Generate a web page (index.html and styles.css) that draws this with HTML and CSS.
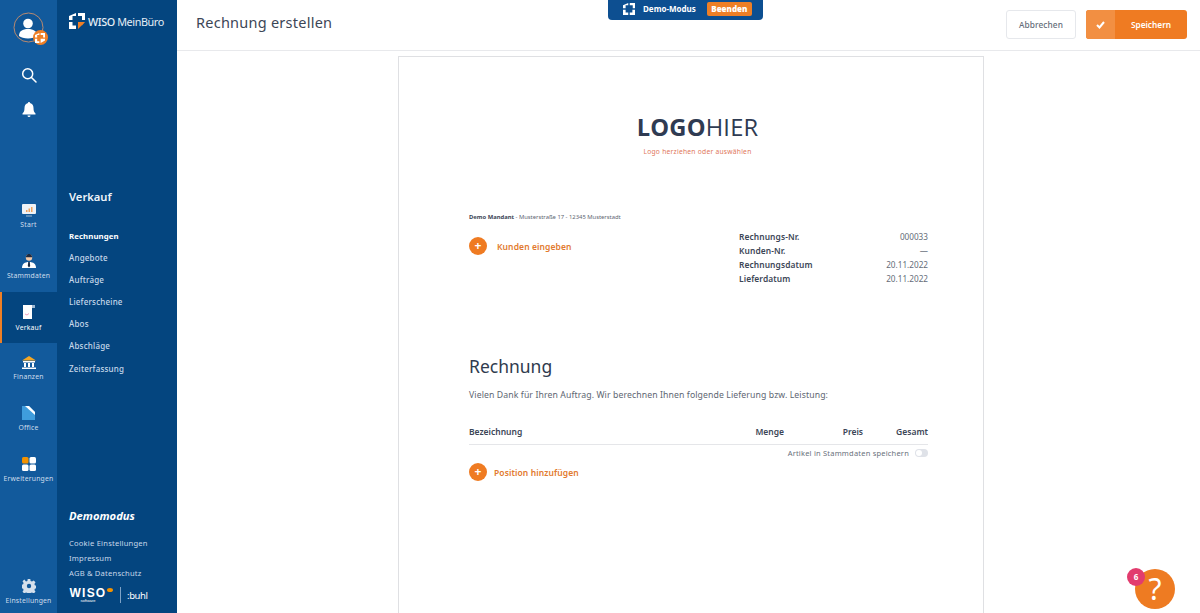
FILE: index.html
```html
<!DOCTYPE html>
<html lang="de">
<head>
  <meta charset="UTF-8">
  <title>Rechnung erstellen</title>
  <link rel="stylesheet" href="styles.css">
</head>
<body>

  <!-- Icon-Leiste -->
  <nav class="rail">
    <div class="avatar">
      <svg width="32" height="32" viewBox="0 0 32 32"><circle cx="15.500" cy="15.500" r="14.500" fill="#0f5596" stroke="#b98a70" stroke-width="1"/><circle cx="15" cy="11.500" r="4.800" fill="#fff"/><path d="M6 24c0-5 3.500-7 9-7s9 2 9 7c-2 1.500-5 2.500-9 2.500S8 25.500 6 24z" fill="#fff"/></svg>
      <span class="avatar-badge">
        <svg width="10" height="10" viewBox="0 0 16 16" fill="#fff"><path d="M0 3l7-3v3H3.500v4H0zM9 0h7v7h-3V3H9zM0 9h3.500v4H7v3H0zM16 9v3l-7 4V9z"/></svg>
      </span>
    </div>
    <a class="rail-tool"><svg width="16" height="16" viewBox="0 0 16 16" fill="none" stroke="#fff" stroke-width="1.500"><circle cx="6.700" cy="6.700" r="5"/><path d="M10.500 10.500l4.500 4.500" stroke-linecap="round"/></svg></a>
    <a class="rail-tool"><svg width="14" height="15" viewBox="0 0 14 15" fill="#fff"><path d="M7 0c.6 0 1 .4 1 1 2.400.5 3.500 2.400 3.500 5 0 3 .7 4.300 2 5.500v1H.5v-1C1.800 10.300 2.500 9 2.500 6c0-2.600 1.100-4.500 3.500-5 0-.6.400-1 1-1zM5.500 13.500h3a1.500 1.500 0 0 1-3 0z"/></svg></a>

    <div class="rail-group">
      <a class="rail-item">
        <svg width="14" height="13" viewBox="0 0 14 13"><rect width="14" height="10" rx="1" fill="#eef2f6"/><rect x="4" y="6" width="1.500" height="2" fill="#f0a35e"/><rect x="6.500" y="4.500" width="1.500" height="3.500" fill="#f0a35e"/><rect x="9" y="3" width="1.500" height="5" fill="#f0a35e"/><rect x="4" y="11.500" width="6" height="1" fill="#9db9d4"/></svg>
        <span>Start</span>
      </a>
      <a class="rail-item">
        <svg width="14" height="14" viewBox="0 0 14 14"><circle cx="7" cy="3.500" r="3.200" fill="#f3c9a8"/><path d="M3.800 3.200C4 1 5.500 0 7 0s3 1 3.200 3.200z" fill="#1d2c44"/><path d="M0 14c0-4 2.500-6 7-6s7 2 7 6z" fill="#fff"/><path d="M6.200 8h1.600l.4 4-1.200 1.500L5.800 12z" fill="#1d2c44"/></svg>
        <span>Stammdaten</span>
      </a>
      <a class="rail-item active">
        <svg width="14" height="16" viewBox="0 0 14 16"><path d="M1 1h9v14H1z" fill="#fff"/><path d="M10 1h3v3h-3z" fill="#9db9d4"/><path d="M3 10l2 1 2-1.500" stroke="#ee9fc0" fill="none"/></svg>
        <span>Verkauf</span>
      </a>
      <a class="rail-item">
        <svg width="14" height="13" viewBox="0 0 14 13"><path d="M7 0l7 4.500H0z" fill="#f5a623"/><rect x="1" y="5" width="12" height="1.500" fill="#fff"/><path d="M2 7h2v4H2zM6 7h2v4H6zM10 7h2v4h-2z" fill="#fff"/><rect y="11.500" width="14" height="1.500" fill="#fff"/></svg>
        <span>Finanzen</span>
      </a>
      <a class="rail-item">
        <svg width="13" height="14" viewBox="0 0 13 14"><path d="M0 0h7l6 6v8H0z" fill="#3f9ddd"/><path d="M3 0h4l6 6v3z" fill="#fff"/></svg>
        <span>Office</span>
      </a>
      <a class="rail-item">
        <svg width="14" height="14" viewBox="0 0 14 14"><rect width="6.500" height="6.500" rx="1.500" fill="#f39200"/><rect x="7.500" width="6.500" height="6.500" rx="1.500" fill="#fff"/><rect y="7.500" width="6.500" height="6.500" rx="1.500" fill="#fff"/><rect x="7.500" y="7.500" width="6.500" height="6.500" rx="1.500" fill="#fff"/></svg>
        <span>Erweiterungen</span>
      </a>
    </div>

    <a class="rail-item rail-bottom">
      <svg width="14" height="14" viewBox="0 0 14 14"><path d="M5.700 0h2.600l.3 2 1.400.6 1.700-1.100 1.800 1.800-1.100 1.700.6 1.400 2 .3v2.600l-2 .3-.6 1.400 1.100 1.700-1.800 1.800-1.700-1.100-1.400.6-.3 2H5.700l-.3-2-1.400-.6-1.700 1.100-1.800-1.800 1.100-1.700-.6-1.400-2-.3V5.700l2-.3.6-1.400-1.100-1.700 1.800-1.800L4 2.600 5.400 2z" fill="#d5e0ec"/><circle cx="7" cy="7" r="2.200" fill="#125a9c"/></svg>
      <span>Einstellungen</span>
    </a>
  </nav>

  <!-- Untermenue -->
  <aside class="subnav">
    <div class="brand">
      <svg width="16" height="16" viewBox="0 0 16 16"><path d="M0 3l7-3v3H3.500v4H0zM9 0h7v7h-3V3H9zM0 9h3.500v3.500H7V16H0z" fill="#fff"/><path d="M9 9h7l-3 3.500H12.500L9 16z" fill="#ee7f26"/></svg>
      <span class="brand-name"><b>WISO</b> MeinBüro</span>
    </div>

    <h2 class="subnav-title">Verkauf</h2>
    <ul class="subnav-list">
      <li class="current">Rechnungen</li>
      <li>Angebote</li>
      <li>Aufträge</li>
      <li>Lieferscheine</li>
      <li>Abos</li>
      <li>Abschläge</li>
      <li>Zeiterfassung</li>
    </ul>

    <div class="subnav-foot">
      <div class="demo-title">Demomodus</div>
      <a>Cookie Einstellungen</a>
      <a>Impressum</a>
      <a>AGB &amp; Datenschutz</a>
      <div class="foot-logos">
        <span class="wiso">WISO<small>software</small><i></i></span>
        <span class="foot-sep"></span>
        <span class="buhl">:buhl</span>
      </div>
    </div>
  </aside>

  <main class="main">
    <header class="topbar">
      <h1>Rechnung erstellen</h1>
      <div class="actions">
        <button class="btn-cancel">Abbrechen</button>
        <button class="btn-save"><span class="btn-check"><svg width="9" height="8" viewBox="0 0 9 8" fill="none" stroke="#fff" stroke-width="2"><path d="M1 4l2.500 2.500L8 1"/></svg></span><span class="btn-label">Speichern</span></button>
      </div>
    </header>

    <div class="demo-bar">
      <svg width="12" height="12" viewBox="0 0 16 16" fill="#fff"><path d="M0 3l7-3v3H3.500v4H0zM9 0h7v7h-3V3H9zM0 9h3.500v3.500H7V16H0zM16 9v7H9v-3.500h3.500V9z"/></svg>
      <span>Demo-Modus</span>
      <b>Beenden</b>
    </div>

    <section class="paper">
      <div class="logo-drop">
        <div class="logo-text"><b>LOGO</b>HIER</div>
        <div class="logo-hint">Logo herziehen oder auswählen</div>
      </div>

      <div class="sender"><b>Demo Mandant</b> - Musterstraße 17 - 12345 Musterstadt</div>

      <div class="address-row">
        <a class="add-link add-customer"><span class="plus">+</span>Kunden eingeben</a>
        <dl class="meta">
          <dt>Rechnungs-Nr.</dt><dd>000033</dd>
          <dt>Kunden-Nr.</dt><dd>—</dd>
          <dt>Rechnungsdatum</dt><dd>20.11.2022</dd>
          <dt>Lieferdatum</dt><dd>20.11.2022</dd>
        </dl>
      </div>

      <h2 class="doc-title">Rechnung</h2>
      <p class="doc-intro">Vielen Dank für Ihren Auftrag. Wir berechnen Ihnen folgende Lieferung bzw. Leistung:</p>

      <div class="table-head">
        <span class="col-name">Bezeichnung</span>
        <span class="col-qty">Menge</span>
        <span class="col-price">Preis</span>
        <span class="col-total">Gesamt</span>
      </div>
      <div class="save-row">
        <span>Artikel in Stammdaten speichern</span>
        <span class="toggle"></span>
      </div>
      <a class="add-link add-position"><span class="plus">+</span>Position hinzufügen</a>
    </section>

    <div class="help">
      <span class="help-badge">6</span>
      ?
    </div>
  </main>

</body>
</html>
```

FILE: styles.css
```css
* { box-sizing: border-box; }

html, body {
  margin: 0;
  height: 613px;
  overflow: hidden;
}

body {
  display: flex;
  font-family: 'Noto Sans', sans-serif;
  background: #fff;
  color: #3c4656;
}

/* Icon-Leiste */
.rail {
  width: 57px;
  flex: none;
  background: #125a9c;
  display: flex;
  flex-direction: column;
  align-items: center;
  padding-top: 12px;
}

.avatar {
  position: relative;
  width: 32px;
  height: 32px;
  margin-bottom: 13px;
}

.avatar svg { display: block; }

.avatar-badge {
  position: absolute;
  right: -3px;
  bottom: -1px;
  width: 15px;
  height: 15px;
  border-radius: 50%;
  background: #ee7f26;
  display: flex;
  justify-content: center;
  align-items: center;
}

.rail-tool {
  height: 35px;
  display: flex;
  justify-content: center;
  align-items: center;
}

.rail-group {
  width: 100%;
  margin-top: 64px;
}

.rail-item {
  height: 50.700px;
  width: 100%;
  display: flex;
  flex-direction: column;
  justify-content: center;
  align-items: center;
  gap: 3px;
  color: #d0deec;
  font-size: 6.800px;
  letter-spacing: .2px;
  white-space: nowrap;
}

.rail-item.active {
  background: #04457f;
  color: #fff;
  border-left: 2px solid #ee7f26;
  padding-right: 2px;
}

.rail-bottom {
  height: 41px;
  margin-top: auto;
  margin-bottom: 1px;
}

/* Untermenue */
.subnav {
  width: 120px;
  flex: none;
  background: #04457f;
  padding: 13px 0 0 12px;
  display: flex;
  flex-direction: column;
  color: #c7d8ea;
}

.brand {
  display: flex;
  align-items: center;
  gap: 3px;
  height: 16px;
}

.brand-name {
  color: #e6eef6;
  font-size: 10.800px;
  letter-spacing: -.4px;
  white-space: nowrap;
}

.brand-name b { font-weight: 500; }

.subnav-title {
  margin: 159px 0 0;
  font-size: 11.200px;
  line-height: 18px;
  font-weight: 600;
  color: #eef4fa;
}

.subnav-list {
  list-style: none;
  margin: 19px 0 0;
  padding: 0;
  font-size: 8px;
  font-weight: 500;
}

.subnav-list li {
  height: 22.100px;
  line-height: 22px;
  letter-spacing: .2px;
}

.subnav-list .current {
  color: #fff;
  font-size: 7.800px;
  font-weight: 700;
  letter-spacing: .1px;
}

.subnav-foot {
  margin-top: auto;
  font-size: 7.600px;
  display: flex;
  flex-direction: column;
}

.subnav-foot a {
  height: 15px;
  line-height: 15px;
  letter-spacing: .2px;
}

.demo-title {
  color: #fff;
  font-size: 11.200px;
  font-style: italic;
  font-weight: 700;
  line-height: 18px;
  margin-bottom: 11px;
}

.foot-logos {
  display: flex;
  align-items: center;
  height: 22px;
  margin: 3px 0 7px;
  color: #fff;
}

.wiso {
  position: relative;
  width: 38px;
  font-family: 'Liberation Sans', sans-serif;
  font-weight: 700;
  font-size: 12px;
  line-height: 10px;
  letter-spacing: 1.200px;
  display: flex;
  flex-direction: column;
  align-items: center;
}

.wiso small {
  font-size: 4px;
  line-height: 5px;
  font-weight: 400;
  letter-spacing: 0;
}

.wiso i {
  position: absolute;
  right: -6px;
  top: 0;
  width: 6px;
  height: 4px;
  border-radius: 50%;
  background: #f39200;
}

.foot-sep {
  width: 1px;
  height: 16px;
  background: #7ea2c6;
  margin: 0 6px 0 13px;
}

.buhl {
  font-size: 9.500px;
  letter-spacing: -.4px;
}

/* Hauptbereich */
.main {
  flex: 1;
  min-width: 0;
  position: relative;
  display: flex;
  flex-direction: column;
}

.topbar {
  height: 51px;
  flex: none;
  border-bottom: 1px solid #e8e9ec;
  display: flex;
  justify-content: space-between;
  align-items: center;
  padding: 0 13px 7px 19px;
}

.topbar h1 {
  margin: 0;
  font-size: 14.500px;
  font-weight: 400;
  letter-spacing: .25px;
  color: #3c4656;
}

.actions {
  display: flex;
  gap: 10px;
  margin-top: 6px;
}

.btn-cancel {
  width: 70px;
  height: 29px;
  padding: 0;
  background: #fff;
  border: 1px solid #e6e8ec;
  border-radius: 3px;
  font: 500 8.300px 'Noto Sans', sans-serif;
  letter-spacing: .1px;
  color: #646c78;
}

.btn-save {
  width: 101px;
  height: 29px;
  padding: 0;
  border: 0;
  border-radius: 3px;
  background: #ef7b22;
  display: flex;
  overflow: hidden;
  color: #fff;
  font: 600 8.300px 'Noto Sans', sans-serif;
}

.btn-check {
  width: 29px;
  background: #f28f42;
  display: flex;
  justify-content: center;
  align-items: center;
}

.btn-label {
  flex: 1;
  line-height: 29px;
  text-align: center;
}

.demo-bar {
  position: absolute;
  top: 0;
  left: 431px;
  width: 155px;
  height: 20px;
  background: #0d4f91;
  border-radius: 0 0 4px 4px;
  display: flex;
  align-items: center;
  padding: 0 0 3px 15px;
  color: #fff;
  font-size: 8px;
  font-weight: 700;
}

.demo-bar span { margin-left: 8px; }

.demo-bar b {
  margin-left: 11px;
  width: 45px;
  height: 14px;
  line-height: 14px;
  text-align: center;
  background: #ee7f26;
  border-radius: 2px;
}

/* Rechnung */
.paper {
  width: 586px;
  flex: 1;
  margin: 5px 0 0 221px;
  border: 1px solid #dfe0e3;
  border-bottom: 0;
  padding: 0 55px 0 70px;
}

.logo-drop {
  padding-top: 52px;
  text-align: center;
  margin-left: -2px;
}

.logo-text {
  font-family: 'Open Sans', sans-serif;
  font-size: 23.700px;
  line-height: 36px;
  letter-spacing: .2px;
  color: #2f3b52;
}

.logo-hint {
  margin-top: 2px;
  font-size: 6.700px;
  line-height: 10px;
  color: #e0775a;
  letter-spacing: .25px;
}

.sender {
  margin-top: 56px;
  font-size: 5.850px;
  line-height: 8px;
  color: #5e6672;
}

.sender b { color: #3c4656; }

.address-row {
  display: flex;
  justify-content: space-between;
  margin-top: 9px;
}

.add-link {
  display: flex;
  align-items: center;
  color: #e27a2e;
  font-size: 8.500px;
  font-weight: 600;
  letter-spacing: .1px;
}

.add-customer {
  align-self: flex-start;
  margin-top: 7px;
}

.add-position { margin-top: 2px; }

.plus {
  width: 18px;
  height: 18px;
  border-radius: 50%;
  background: #ef7b22;
  color: #fff;
  font-size: 12px;
  font-weight: 700;
  line-height: 18px;
  text-align: center;
  margin-right: 7px;
}

.add-customer .plus { margin-right: 10px; }

.meta {
  width: 189px;
  margin: 0;
  display: grid;
  grid-template-columns: 1fr auto;
  grid-auto-rows: 14px;
  font-size: 8.400px;
  line-height: 14px;
}

.meta dt {
  font-weight: 600;
  letter-spacing: .1px;
}

.meta dd {
  margin: 0;
  text-align: right;
  color: #656d78;
  font-size: 8.200px;
}

.doc-title {
  margin: 68px 0 0;
  font-size: 17.500px;
  font-weight: 400;
  line-height: 24px;
  color: #2f3b4e;
}

.doc-intro {
  margin: 10px 0 0;
  font-size: 8.700px;
  line-height: 14px;
  letter-spacing: .1px;
  color: #5e6672;
}

.table-head {
  display: flex;
  height: 22px;
  margin-top: 21px;
  border-bottom: 1px solid #e5e6e9;
  font-size: 8.500px;
  font-weight: 600;
  line-height: 14px;
  padding-top: 2px;
}

.col-name { flex: 1; }
.col-qty { width: 40px; text-align: right; }
.col-price { width: 79px; text-align: right; }
.col-total { width: 65px; text-align: right; }

.save-row {
  display: flex;
  justify-content: flex-end;
  align-items: center;
  gap: 6px;
  height: 16px;
  font-size: 7.500px;
  letter-spacing: .2px;
  color: #6a717c;
}

.toggle {
  width: 13px;
  height: 8px;
  border-radius: 4px;
  background: #dfe2e8;
  display: flex;
  align-items: center;
  padding-left: 1px;
}

.toggle::after {
  content: '';
  width: 6px;
  height: 6px;
  border-radius: 50%;
  background: #fff;
}

.help {
  position: absolute;
  right: 25px;
  bottom: 4px;
  width: 40px;
  height: 40px;
  border-radius: 50%;
  background: #ee7b22;
  color: #fff;
  font-size: 30px;
  font-weight: 400;
  line-height: 40px;
  text-align: center;
}

.help-badge {
  position: absolute;
  left: -8px;
  top: -1px;
  width: 18px;
  height: 18px;
  border-radius: 50%;
  background: #e23c6e;
  font-size: 8px;
  font-weight: 700;
  line-height: 18px;
}
```
